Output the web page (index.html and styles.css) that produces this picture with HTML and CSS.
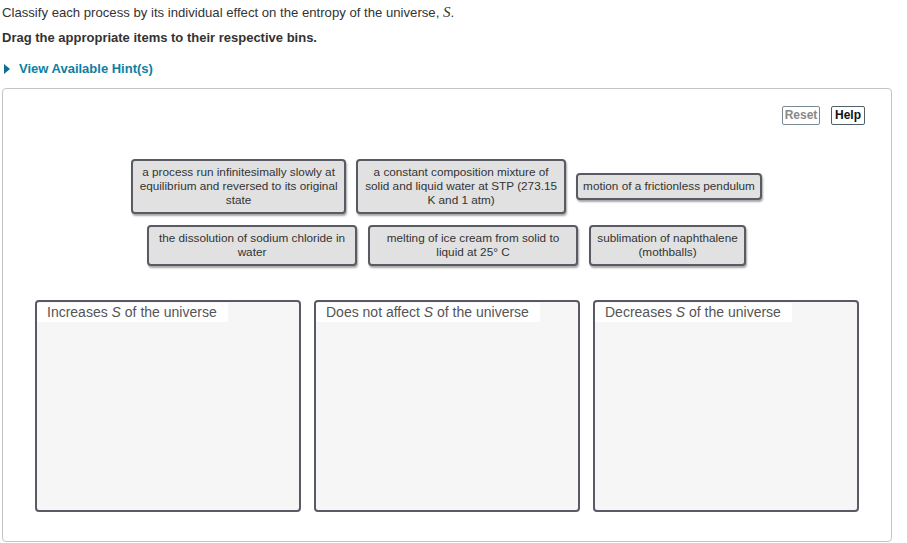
FILE: index.html
```html
<!DOCTYPE html>
<html lang="en">

<head>
    <meta charset="UTF-8">
    <title>Classify entropy processes</title>
    <link rel="stylesheet" href="styles.css">
</head>

<body>
    <p class="prompt">Classify each process by its individual effect on the entropy of the universe, <i class="math">S</i>.</p>
    <p class="instructions">Drag the appropriate items to their respective bins.</p>
    <a class="hint" href="#"><span class="hint-arrow"></span>View Available Hint(s)</a>

    <section class="activity">
        <div class="toolbar">
            <button class="btn btn-reset">Reset</button>
            <button class="btn btn-help">Help</button>
        </div>

        <div class="items">
            <div class="item-row">
                <div class="item item-xl">a process run infinitesimally slowly at equilibrium and reversed to its original state</div>
                <div class="item">a constant composition mixture of solid and liquid water at STP (273.15 K and 1 atm)</div>
                <div class="item item-auto">motion of a frictionless pendulum</div>
            </div>
            <div class="item-row">
                <div class="item">the dissolution of sodium chloride in water</div>
                <div class="item">melting of ice cream from solid to liquid at 25&deg; C</div>
                <div class="item item-sm">sublimation of naphthalene (mothballs)</div>
            </div>
        </div>

        <div class="bins">
            <div class="bin"><span class="bin-label">Increases <i>S</i> of the universe</span></div>
            <div class="bin"><span class="bin-label">Does not affect <i>S</i> of the universe</span></div>
            <div class="bin"><span class="bin-label">Decreases <i>S</i> of the universe</span></div>
        </div>
    </section>
</body>

</html>
```

FILE: styles.css
```css
html {
    box-sizing: border-box;
    font-family: "Liberation Sans", Arial, sans-serif;
    font-size: 13px;
    color: #333;
}

*,
*::before,
*::after {
    box-sizing: inherit;
}

body {
    margin: 0;
    padding: 4px 2px 0 2px;
    width: 894px;
}

.prompt {
    margin: 0;
    line-height: 16px;
    font-size: 13.15px;
}

.math {
    font-family: "Liberation Serif", serif;
    font-size: 15px;
}

.instructions {
    margin: 9px 0 0;
    font-weight: bold;
    line-height: 16px;
}

.hint {
    display: inline-flex;
    align-items: center;
    margin: 15px 0 0 2px;
    color: #0c7fa3;
    font-weight: bold;
    text-decoration: none;
    line-height: 16px;
}

.hint-arrow {
    width: 0;
    height: 0;
    margin-right: 9px;
    border-top: 5px solid transparent;
    border-bottom: 5px solid transparent;
    border-left: 6px solid #0c6e90;
}

.activity {
    margin-top: 11px;
    height: 454px;
    border: 1px solid #c4c4c4;
    border-radius: 4px;
    padding: 17px 26px 0 32px;
}

.toolbar {
    display: flex;
    justify-content: flex-end;
    gap: 11px;
}

.btn {
    font-family: inherit;
    font-size: 12px;
    font-weight: bold;
    line-height: 15px;
    padding: 1px 0;
    text-align: center;
    background: #fff;
    border: 1px solid #50606a;
    border-radius: 2px;
}

.btn-reset {
    width: 38px;
    color: #888;
    border-color: #7a8a90;
}

.btn-help {
    width: 34px;
    color: #111;
}

.items {
    display: flex;
    flex-direction: column;
    gap: 11px;
    margin: 34px 0 0 -34px;
    width: 891px;
}

.item-row {
    display: flex;
    justify-content: center;
    align-items: center;
    gap: 11px;
}

.item-row:first-child {
    gap: 10px;
}

.item {
    width: 210px;
    background: #e1e1e1;
    border: 2px solid #5a5a62;
    border-radius: 4px;
    box-shadow: 1px 2px 2px rgba(0, 0, 0, .35);
    padding: 4px 5px 5px;
    font-size: 11.75px;
    line-height: 14px;
    text-align: center;
    color: #333;
}

.item-auto {
    width: auto;
}

.item-xl {
    width: 215px;
}

.item-sm {
    width: 157px;
}

.bins {
    display: flex;
    gap: 13px;
    margin-top: 34px;
}

.bin {
    width: 266px;
    height: 212px;
    background: #f6f6f6;
    border: 2px solid #5a5a66;
    border-radius: 4px;
    padding-top: 1px;
}

.bin-label {
    display: inline-block;
    background: #fff;
    color: #555;
    font-size: 14px;
    padding: 2px 11px 2px 10px;
    line-height: 15px;
}
```
